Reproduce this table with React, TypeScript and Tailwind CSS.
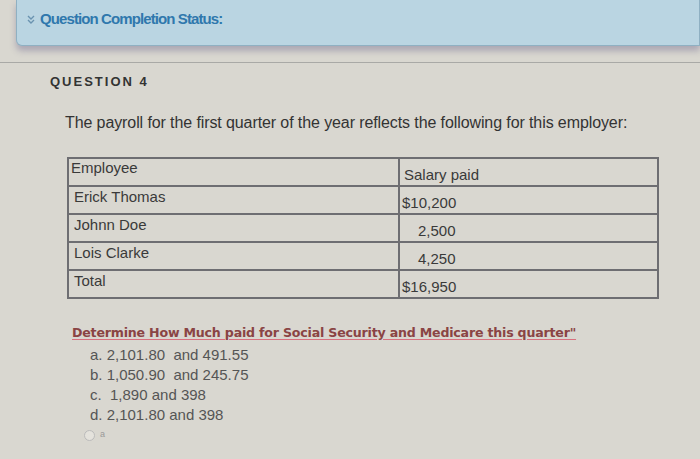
import React from "react";

const rows: { name: string; salary: string; indent?: boolean }[] = [
  { name: "Erick Thomas", salary: "$10,200" },
  { name: "Johnn Doe", salary: "2,500", indent: true },
  { name: "Lois Clarke", salary: "4,250", indent: true },
  { name: "Total", salary: "$16,950" },
];

const options = [
  "a. 2,101.80  and 491.55",
  "b. 1,050.90  and 245.75",
  "c.  1,890 and 398",
  "d. 2,101.80 and 398",
];

export default function App() {
  return (
    <div className="w-[700px] h-[459px] overflow-hidden bg-[#d9d7d0] font-['Liberation_Sans',Arial,sans-serif]">
      <div className="pl-4 pr-0">
        <div className="h-[46px] bg-[#bad5e2] border border-[#8fb0c2] border-t-0 rounded-bl-md shadow-[0_5px_6px_rgba(90,80,130,0.35)] flex items-start pt-[8px] pl-[10px]">
          <svg className="w-[8px] h-[9px] mr-[5px] mt-[7px]" viewBox="0 0 8 9" fill="none" stroke="#6a93b0" strokeWidth="1.4">
            <path d="M1 1l3 3 3-3M1 5l3 3 3-3" />
          </svg>
          <span className="text-[#2f78ad] font-bold text-[15px] tracking-[-0.9px]">
            Question Completion Status:
          </span>
        </div>
      </div>

      <div className="mt-[16px] border-t border-[#a9a9a6] pt-[9px] pl-[50px]">
        <div className="text-[#333] font-bold text-[13px] tracking-[2px]">QUESTION 4</div>
        <p className="mt-[19px] ml-[15px] text-[#333] text-[16px] tracking-[-0.1px]">
          The payroll for the first quarter of the year reflects the following for this employer:
        </p>

        <table className="mt-[22px] ml-[17px] w-[592px] border-collapse text-[15px] text-[#3a3a3a]">
          <tbody>
            <tr className="h-[28px]">
              <td className="border-2 border-[#6e6e72] w-[331px] align-top pl-[2px] leading-[17px]">Employee</td>
              <td className="border-2 border-[#6e6e72] align-bottom pl-[4px] leading-[20px]">Salary paid</td>
            </tr>
            {rows.map((r) => (
              <tr key={r.name} className="h-[28px]">
                <td className="border-2 border-[#6e6e72] pl-[5px] align-top leading-[20px]">{r.name}</td>
                <td className={"border-2 border-[#6e6e72] align-bottom leading-[20px] " + (r.indent ? "pl-[18px]" : "pl-[2px]")}>
                  {r.salary}
                </td>
              </tr>
            ))}
          </tbody>
        </table>

        <div className="mt-[25px] ml-[22px] text-[12.6px] font-bold text-[#8a4444] underline decoration-[#d8707e] underline-offset-2 [font-family:'DejaVu_Sans',Verdana,sans-serif] tracking-[-0.2px]">
          Determine How Much paid for Social Security and Medicare this quarter"
        </div>
        <div className="ml-[40px] mt-[4px] flex flex-col gap-[2px] text-[15px] text-[#555] leading-[18px] whitespace-pre">
          {options.map((o) => (
            <div key={o}>{o}</div>
          ))}
        </div>
        <div className="ml-[34px] mt-[4px] flex items-center gap-[5px] text-[9px] text-[#999]">
          <span className="w-[11px] h-[11px] rounded-full border border-[#bbb] bg-[#e4e2dc]" />
          <span>a</span>
        </div>
      </div>
    </div>
  );
}
